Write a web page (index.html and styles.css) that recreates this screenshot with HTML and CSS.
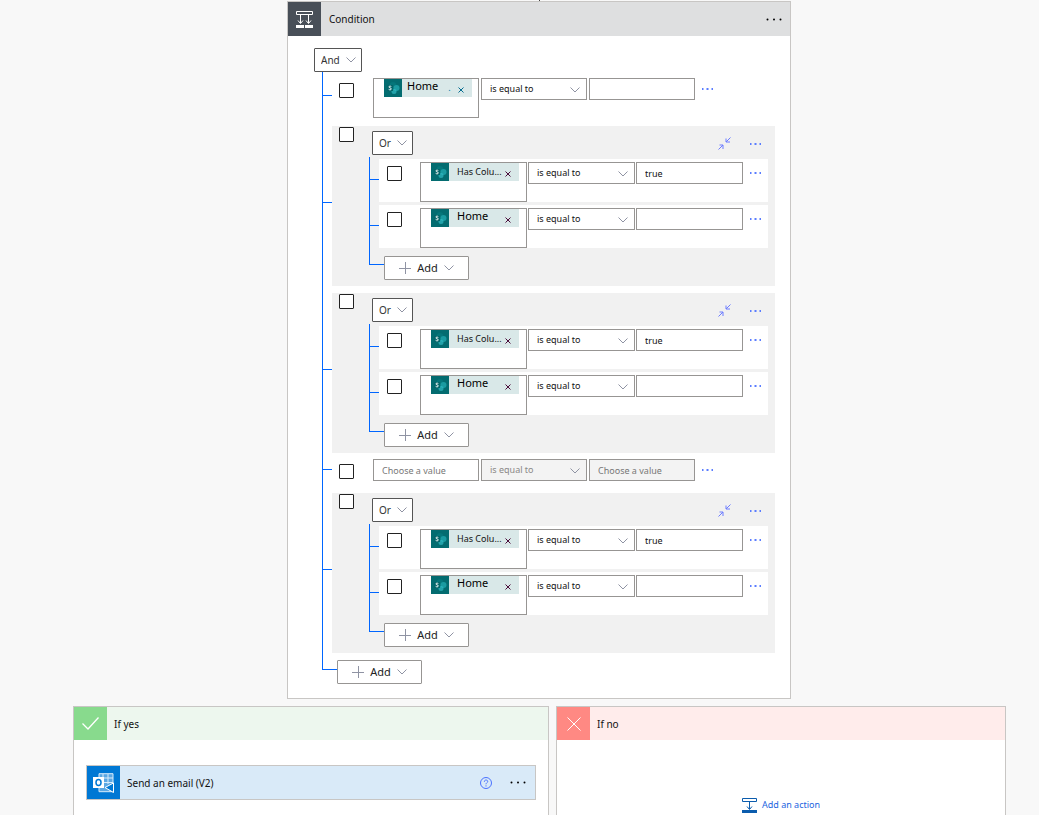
FILE: index.html
```html
<!DOCTYPE html>
<html lang="en">
<head>
    <meta charset="UTF-8">
    <meta name="viewport" content="width=device-width, initial-scale=1.0">
    <title>Flow - Condition</title>
    <link rel="stylesheet" href="styles.css">
</head>
<body>

    <svg class="sprite" aria-hidden="true">
        <symbol id="i-chevron" viewBox="0 0 10 6"><path d="M.5.5 5 5 9.5.5" fill="none" stroke="currentColor"/></symbol>
        <symbol id="i-plus" viewBox="0 0 12 12"><path d="M6.5 0v12M0 6.5h12" fill="none" stroke="currentColor"/></symbol>
        <symbol id="i-dots" viewBox="0 0 11 2"><path d="M0 0h1.500v2H0zM4.500 0h2v2h-2zM9.500 0H11v2H9.500z" fill="currentColor"/></symbol>
        <symbol id="i-more" viewBox="0 0 16 3"><circle cx="1.500" cy="1.500" r="1"/><circle cx="8" cy="1.500" r="1"/><circle cx="14.500" cy="1.500" r="1"/></symbol>
        <symbol id="i-collapse" viewBox="0 0 13 13"><path d="M12.500.5 8 5M8 1.500V5h4M.5 12.500 5 8M1.500 8H5v4" fill="none" stroke="currentColor"/></symbol>
        <symbol id="i-sharepoint" viewBox="0 0 18 18">
            <rect width="18" height="18" fill="#036c70"/>
            <circle cx="9" cy="6.500" r="3.500" fill="#05767a"/>
            <circle cx="12.500" cy="9" r="3" fill="#1a9ba1"/>
            <circle cx="10" cy="12.500" r="2.500" fill="#37c6d0" opacity=".6"/>
            <rect x="3" y="6" width="6" height="6" fill="#03666a"/>
            <path d="M7.300 7.500C6.500 7 4.800 7 4.900 8s2.400.7 2.400 1.900-1.900 1.100-2.600.5" fill="none" stroke="#fff"/>
        </symbol>
    </svg>

    <div class="stem"></div>

    <section class="card">
        <header class="card-header">
            <span class="tile tile-dark">
                <svg width="17" height="17" viewBox="0 0 17 17" fill="none" stroke="#fff">
                    <path d="M.5.5h16v3H.5zM4.500 3.500V12M12.500 3.500V12M2 9.500l2.500 3 2.500-3M10 9.500l2.500 3 2.500-3"/>
                    <path d="M0 14h8v3H0zM9 14h8v3H9z" fill="#fff" stroke="none"/>
                </svg>
            </span>
            <h1>Condition</h1>
            <button class="more" aria-label="Condition menu"><svg width="16" height="3"><use href="#i-more"/></svg></button>
        </header>
        <div class="card-body" id="condition"></div>
    </section>

    <div class="branches">
        <section class="branch">
            <header class="branch-header yes">
                <span class="tile tile-green">
                    <svg width="17" height="13" viewBox="0 0 17 13"><path d="M.5 6.500 6 12 16.500.5" fill="none" stroke="#fff" stroke-width="1.300"/></svg>
                </span>
                <h2>If yes</h2>
            </header>
            <div class="action">
                <span class="tile tile-blue">
                    <svg width="21" height="20" viewBox="0 0 21 20">
                        <path d="M6 .7h14v18H6z" fill="#5ba7e3"/>
                        <path d="M6 .7h14v18H6zM10 1v12M15 1v10M6 5h14M6 9.500h14" fill="none" stroke="#d8ecfb"/>
                        <path d="M20.500 10 12 14.500l8.500 5z" fill="#0078d4" stroke="#fff"/>
                        <rect y="4" width="11" height="11" fill="#fff"/>
                        <ellipse cx="5.500" cy="9.500" rx="2.500" ry="3" fill="none" stroke="#0078d4" stroke-width="1.500"/>
                    </svg>
                </span>
                <h3>Send an email (V2)</h3>
                <button class="help" aria-label="Help">
                    <svg width="12" height="12" viewBox="0 0 12 12" fill="none" stroke="currentColor"><circle cx="6" cy="6" r="5.500"/><path d="M4.300 4.800c0-2.400 3.500-2.300 3.400-.2C7.700 5.700 6 5.800 6 7.300M6 8.300v1.200"/></svg>
                </button>
                <button class="more" aria-label="Send an email menu"><svg width="16" height="3"><use href="#i-more"/></svg></button>
            </div>
        </section>

        <section class="branch">
            <header class="branch-header no">
                <span class="tile tile-red">
                    <svg width="14" height="14" viewBox="0 0 14 14"><path d="m.5.5 13 13m0-13-13 13" fill="none" stroke="#fff"/></svg>
                </span>
                <h2>If no</h2>
            </header>
            <a class="add-action" href="#">
                <svg width="15" height="15" viewBox="0 0 15 15" fill="none" stroke="#0b5cad">
                    <path d="M.5.5h14v3H.5zM7.500 3.500V11M5 8.500l2.500 3 2.500-3"/>
                    <path d="M0 12h15v3H0z" fill="#0b5cad" stroke="none"/>
                </svg>
                Add an action
            </a>
        </section>
    </div>

    <script>
        const condition = [
            { field: "Home", value: "", dot: true },
            { rows: [{ field: "Has Colu...", value: "true" }, { field: "Home", value: "" }] },
            { rows: [{ field: "Has Colu...", value: "true" }, { field: "Home", value: "" }] },
            { empty: true },
            { rows: [{ field: "Has Colu...", value: "true" }, { field: "Home", value: "" }] }
        ];

        const icon = (name, w, h) => `<svg width="${w}" height="${h}"><use href="#i-${name}"/></svg>`;
        const checkbox = label => `<input type="checkbox" class="check" aria-label="${label}">`;
        const dots = `<button class="dots" aria-label="Row menu">${icon("dots", 11, 2)}</button>`;
        const addButton = `<div class="add-row"><button class="add">${icon("plus", 12, 12)}Add${icon("chevron", 10, 6)}</button></div>`;

        function joinSelect(word) {
            return `<span class="join"><select aria-label="Join rows with"><option>${word}</option></select>${icon("chevron", 10, 6)}</span>`;
        }

        function token(row) {
            let cls = row.field === "Home" ? "token-name big" : "token-name";
            return `
                <div class="operand">
                    <span class="token">
                        ${icon("sharepoint", 18, 18)}
                        <span class="${cls}">${row.field}</span>
                        ${row.dot ? `<span class="token-dot">.</span>` : ""}
                        <button class="remove" aria-label="Remove ${row.field}">
                            <svg width="6" height="6" viewBox="0 0 6 6"><path d="m.5.5 5 5m0-5-5 5" fill="none" stroke="currentColor"/></svg>
                        </button>
                    </span>
                </div>`;
        }

        function fields(row) {
            let off = row.empty ? "disabled" : "";
            let left = row.empty
                ? `<input type="text" class="field" aria-label="Left value" placeholder="Choose a value">`
                : token(row);
            return `
                <div class="fields">
                    ${left}
                    <span class="operator">
                        <select class="field" aria-label="Operator" ${off}><option>is equal to</option></select>
                        ${icon("chevron", 10, 6)}
                    </span>
                    <input type="text" class="field" aria-label="Right value" value="${row.value || ""}"
                        placeholder="${row.empty ? "Choose a value" : ""}" ${off}>
                </div>`;
        }

        function rowHTML(row) {
            let cls = row.dot ? "row first" : "row";
            return `<li class="${cls}"><div class="row-body">${checkbox("Select row")}${fields(row)}${dots}</div></li>`;
        }

        function groupHTML(group) {
            return `
                <li class="group">
                    <div class="group-body">
                        <div class="group-head">
                            ${checkbox("Select group")}
                            ${joinSelect("Or")}
                            <button class="collapse" aria-label="Collapse group">${icon("collapse", 13, 13)}</button>
                            ${dots}
                        </div>
                        <ul class="tree">${group.rows.map(rowHTML).join("")}</ul>
                        ${addButton}
                    </div>
                </li>`;
        }

        document.getElementById("condition").innerHTML = `
            ${joinSelect("And")}
            <ul class="tree">${condition.map(item => item.rows ? groupHTML(item) : rowHTML(item)).join("")}</ul>
            ${addButton}`;
    </script>
</body>
</html>
```
FILE: styles.css
```css
* {
    box-sizing: border-box;
}
body {
    display: flex;
    flex-direction: column;
    min-height: 100vh;
    margin: 0;
    padding: 0 33px 0 73px;
    background: #f8f8f8;
    color: #111;
    font-family: "Noto Sans", "Open Sans", sans-serif;
    font-size: 10px;
    line-height: 16px;
}
h1, h2, h3 {
    margin: 0;
    font-size: 10px;
    font-weight: 400;
}
ul {
    margin: 0;
    padding: 0;
    list-style: none;
}
button {
    display: flex;
    align-items: center;
    justify-content: center;
    margin: 0;
    padding: 0;
    border: none;
    background: none;
    color: inherit;
    font: inherit;
    cursor: pointer;
}
select, input {
    margin: 0;
    font: inherit;
    color: inherit;
}
svg {
    display: block;
    flex: none;
}
.sprite {
    position: absolute;
    width: 0;
    height: 0;
}
.stem {
    width: 1px;
    height: 1px;
    margin: 0 auto;
    background: #444;
}

/* condition card */
.card {
    align-self: center;
    width: 100%;
    max-width: 504px;
    margin-right: 1px;
    border: 1px solid #c8c6c4;
    background: #fff;
}
.card-header {
    display: flex;
    align-items: center;
    gap: 8px;
    padding-right: 8px;
    background: #dedfe0;
}
.tile {
    display: flex;
    align-items: center;
    justify-content: center;
    width: 33px;
    height: 33px;
}
.tile-dark {
    height: 34px;
    background: #484f58;
}
.tile-green {
    background: #88da8d;
}
.tile-red {
    background: #ff8983;
}
.tile-blue {
    background: #0078d4;
}
.more {
    margin-left: auto;
}
.card-body {
    padding: 12px 15px 14px 26px;
}

/* And / Or drop-downs */
.join {
    display: block;
    position: relative;
    width: 48px;
}
.join select {
    display: block;
    width: 100%;
    height: 24px;
    padding: 0 6px;
    border: 1px solid #555;
    border-radius: 1px;
    background: #fff;
    color: #333;
    appearance: none;
}
.group .join {
    width: 41px;
}
.join svg, .operator svg {
    position: absolute;
    top: 9px;
    right: 6px;
    color: #8f93a3;
    pointer-events: none;
}

/* tree lines */
.tree {
    margin-left: 8px;
    border-left: 1px solid #0066ff;
}
.row, .group {
    display: flex;
    align-items: flex-start;
}
.row::before, .group::before {
    content: "";
    flex: none;
    width: 9px;
    height: 1px;
    margin-top: 16px;
    background: #0066ff;
}
.row.first::before {
    margin-top: 23px;
}
.group::before {
    margin-top: 76px;
}
.row-body {
    display: flex;
    align-items: flex-start;
    flex: 1;
    min-height: 40px;
    padding: 6px 62px 8px 7px;
}
.check {
    flex: none;
    width: 15px;
    height: 15px;
    margin: 5px 19px 0 0;
    border: 1px solid #222;
    border-radius: 1px;
    background: #fff;
    appearance: none;
}
.check:checked {
    background: #0066ff;
}
.fields {
    display: grid;
    grid-template-columns: repeat(3, minmax(0, 1fr));
    align-items: start;
    flex: 1;
    gap: 2px;
}
.field {
    display: block;
    width: 100%;
    height: 22px;
    padding: 0 8px;
    border: 1px solid #979593;
    border-radius: 0;
    background: #fff;
    font-size: 9px;
    appearance: none;
}
.field::placeholder {
    color: #777;
    opacity: 1;
}
.field:disabled {
    background: #f3f3f3;
    color: #8a8886;
    opacity: 1;
}
.operator {
    position: relative;
}
.operator svg {
    right: 7px;
}
.operand {
    height: 40px;
    padding: 0 6px 0 10px;
    border: 1px solid #979593;
    background: #fff;
}
.token {
    display: flex;
    align-items: center;
    height: 18px;
    max-width: 88px;
    padding-right: 8px;
    background: #d9e8e8;
}
.token-name {
    margin-left: 8px;
    font-size: 9px;
    white-space: nowrap;
}
.token-name.big {
    align-self: flex-start;
    font-size: 11px;
    line-height: 14px;
    color: #000;
}
.first .token-name {
    margin-left: 5px;
}
.token-dot {
    margin-left: 10px;
    font-size: 9px;
    color: #0078a8;
}
.remove {
    margin: 4px 0 0 auto;
    color: #4a0d3a;
}
.first .remove {
    color: #036c90;
}
.dots {
    height: 22px;
    margin-left: 7px;
    color: #5a7dff;
}

/* nested group */
.group + .group {
    margin-top: 7px;
}
.group-body {
    flex: 1;
    padding-bottom: 6px;
    background: #f1f1f1;
}
.group-head {
    display: flex;
    align-items: flex-start;
    padding: 5px 14px 0 7px;
}
.group-head .check {
    margin: -4px 18px 0 0;
}
.collapse {
    margin: 6px 12px 0 auto;
    color: #6d7dff;
}
.group-head .dots {
    height: 26px;
}
.group .tree {
    margin: 0 7px 0 37px;
    padding-top: 2px;
}
.group .row::before {
    margin-top: 20px;
}
.group .row + .row {
    margin-top: 3px;
}
.group .row-body {
    padding: 3px 7px 0 8px;
    background: #fff;
}
.group .row .check {
    margin: 4px 18px 0 0;
}
.group .fields {
    gap: 1px;
}

/* Add buttons */
.add-row {
    display: flex;
    align-items: flex-start;
    margin-left: 8px;
}
.add-row::before {
    content: "";
    width: 14px;
    height: 16px;
    border: solid #0066ff;
    border-width: 0 0 1px 1px;
}
.group .add-row {
    margin-left: 37px;
}
.add {
    gap: 6px;
    width: 85px;
    height: 24px;
    margin-top: 7px;
    border: 1px solid #979593;
    border-radius: 1px;
    background: #fff;
    color: #222;
    font-size: 11px;
}
.group .add {
    margin-top: 8px;
}
.add svg {
    color: #8f93a3;
}

/* If yes / If no */
.branches {
    display: grid;
    grid-template-columns: 476fr 450fr;
    gap: 7px;
    flex: 1;
    margin-top: 7px;
}
.branch {
    border: 1px solid #c8c6c4;
    border-bottom: none;
    background: #fff;
}
.branch-header {
    display: flex;
    align-items: center;
    gap: 7px;
}
.yes {
    background: #edf7ee;
}
.no {
    background: #ffeceb;
}
.action {
    display: flex;
    align-items: center;
    gap: 7px;
    margin: 25px 12px 15px;
    padding-right: 9px;
    border: 1px solid #c8c6c4;
    background: #d9eaf8;
}
.help {
    margin-left: auto;
    color: #4a72ff;
}
.action .more {
    margin-left: 11px;
}
.add-action {
    display: flex;
    align-items: center;
    justify-content: center;
    gap: 5px;
    margin-top: 57px;
    color: #1a63e0;
    font-size: 9px;
    text-decoration: none;
}
```
